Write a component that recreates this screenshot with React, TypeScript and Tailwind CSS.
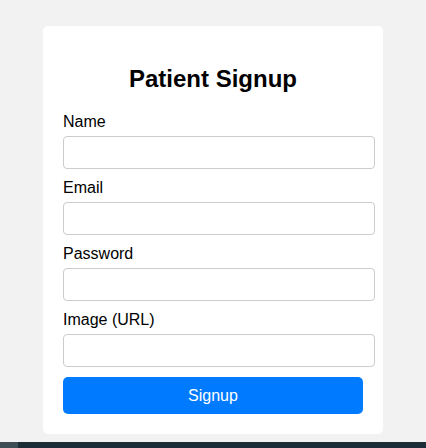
export default function App() {
  const fields = ["Name", "Email", "Password", "Image (URL)"];
  return (
    <div
      className="min-h-[448px] bg-[#f2f2f2] flex flex-col"
      style={{ fontFamily: '"Liberation Sans", Arial, sans-serif' }}
    >
      <div className="pt-[26px] flex justify-center">
        <div className="w-[340px] bg-white rounded-[5px] px-5 pt-[39px] pb-5 flex flex-col">
          <h2 className="text-[24px] leading-[28px] font-bold text-black text-center">
            Patient Signup
          </h2>
          <div className="mt-5 flex flex-col">
            {fields.map((f, i) => (
              <div key={f} className={i > 0 ? "mt-[10px] flex flex-col" : "flex flex-col"}>
                <label className="text-[16px] leading-[18px] text-black">{f}</label>
                <input
                  type={f === "Password" ? "password" : "text"}
                  className="mt-[5px] w-[312px] h-[33px] border border-[#cccccc] rounded-[4px] bg-white outline-none"
                />
              </div>
            ))}
          </div>
          <button className="mt-[10px] w-[300px] h-[37px] rounded-[5px] bg-[#007bff] text-white text-[16px]">
            Signup
          </button>
        </div>
      </div>
      <div className="mt-[8px] h-[6px] flex">
        <div className="w-[18px] bg-[#3f4e56]" />
        <div className="flex-1 bg-[#1d2d38]" />
      </div>
    </div>
  );
}
